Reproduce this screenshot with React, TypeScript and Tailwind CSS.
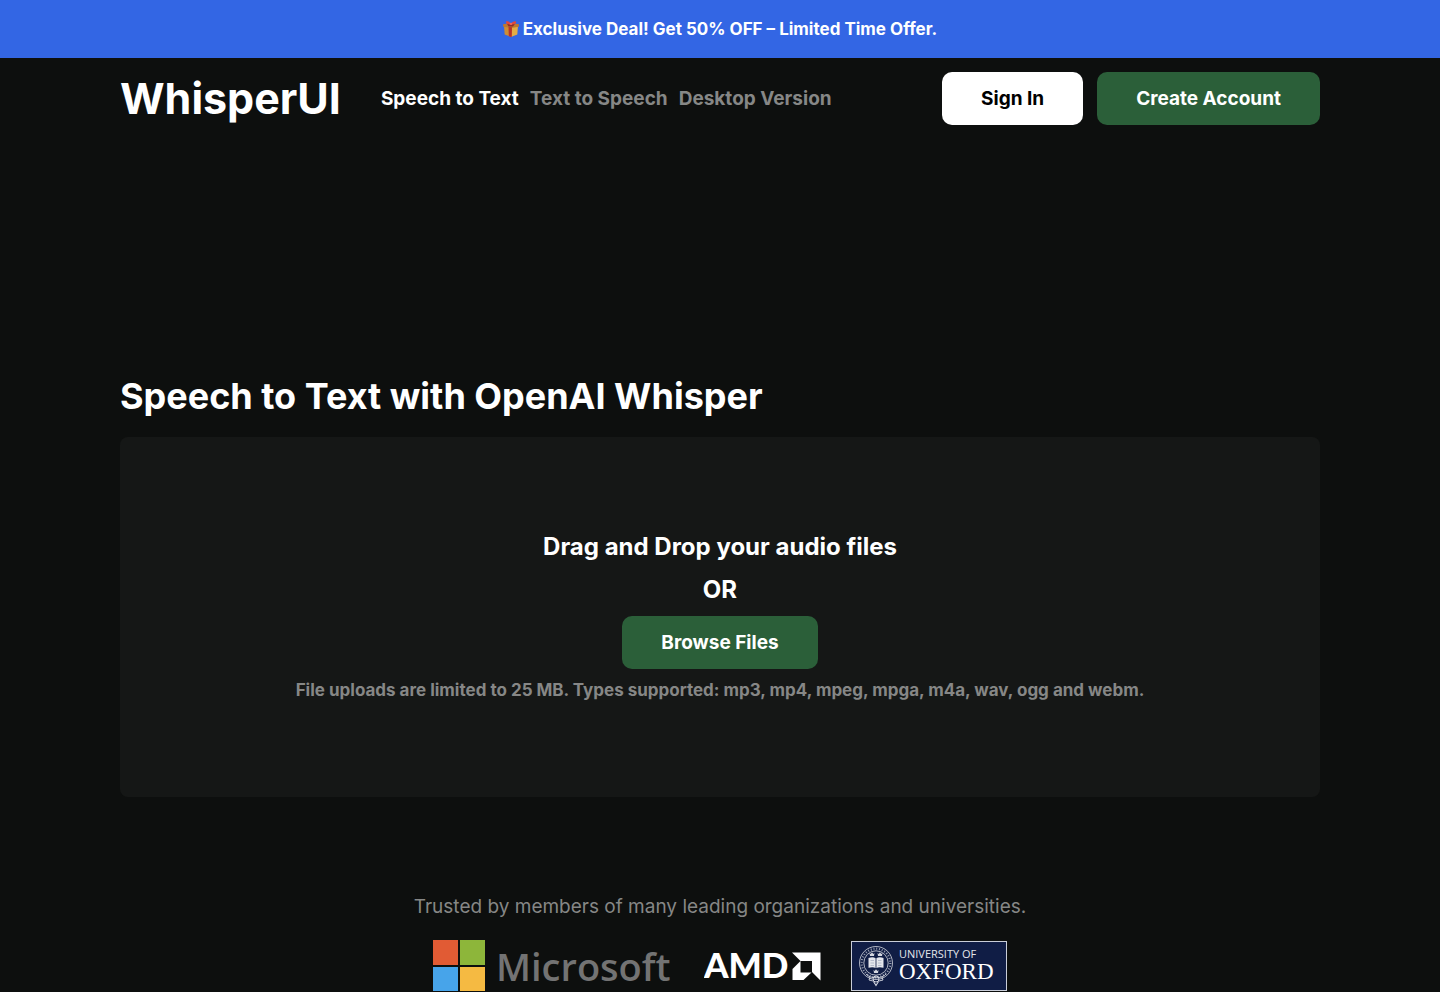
import React, { useRef } from 'react';

const navLinks = [
  { label: 'Speech to Text', href: '#speech-to-text', active: true },
  { label: 'Text to Speech', href: '#text-to-speech', active: false },
  { label: 'Desktop Version', href: '#desktop', active: false },
];

const GiftIcon: React.FC = () => (
  <svg viewBox="0 0 16 16" className="w-4 h-4 shrink-0" aria-hidden="true">
    <path d="M1 4.500 8 6v10l-6.300-2.400z" fill="#cf8d33" />
    <path d="M8 6l7-1.500-.7 9.100L8 16z" fill="#e3ad45" />
    <path d="M0 3.200 8 2l8 1.200-.2 2.500L8 7 .2 5.700z" fill="#bd7730" />
    <path d="M5.500 6l3.500.3-.2 9.500L8 16l-2.200-.8z" fill="#b8322b" />
    <path d="M4 2.800h8l-2 2.800-4.500-.1z" fill="#8e2e2b" />
    <path d="M7.800 2.900C6.600 0 2.800-.7 2.900 1.300c.1 2 3 2.500 4.900 1.600z" fill="#e2473c" />
    <path d="M8 2.900C9.200 0 13.200-.7 13.100 1.300c-.1 2-3.200 2.500-5.100 1.600z" fill="#e2473c" />
    <path d="M6.700 1.900h2.500v2H6.700z" fill="#f0665a" />
  </svg>
);

const MicrosoftLogo: React.FC = () => (
  <svg viewBox="0 0 241 52" className="w-[241px] h-[52px]" role="img" aria-label="Microsoft">
    <path d="M0 0h25v25H0z" fill="#e15b34" />
    <path d="M27 0h25v25H27z" fill="#8db63a" />
    <path d="M0 27h25v24H0z" fill="#47a4ea" />
    <path d="M27 27h25v24H27z" fill="#f5ba42" />
    <text x="63" y="41" fontSize="38" className="font-['Open_Sans',sans-serif] font-semibold" fill="#737373">
      Microsoft
    </text>
  </svg>
);

const AmdLogo: React.FC = () => (
  <svg viewBox="0 -8 117 46" className="w-[117px] h-[46px]" role="img" aria-label="AMD">
    <text x="0" y="27" fontSize="35" className="font-['Lato',sans-serif] font-black" fill="#ffffff">
      AMD
    </text>
    <path d="M88 1.500h28.500v28l-8.500-8.500V10H96.500z" fill="#ffffff" />
    <path d="M96.500 10v11.500h11L99.500 29H88.500V18z" fill="#ffffff" />
  </svg>
);

const OxfordLogo: React.FC = () => (
  <svg viewBox="0 0 156 50" className="w-[156px] h-[50px]" role="img" aria-label="University of Oxford">
    <rect x="0.5" y="0.5" width="155" height="49" fill="#101d45" stroke="#c9cdd8" />
    <g fill="none" stroke="#d5d8e0">
      <circle cx="25" cy="22" r="16.5" strokeWidth="0.8" />
      <circle cx="25" cy="22" r="14.3" strokeWidth="2.2" strokeDasharray="1 1.8" opacity="0.7" />
      <circle cx="25" cy="22" r="12.2" strokeWidth="0.8" />
      <path d="M15 33c4 5 16 5 20 0M19 36l-1 3 4 1M31 36l1 3-4 1" strokeWidth="0.9" />
      <circle cx="25" cy="38" r="3" strokeWidth="1" />
      <path d="M22.500 40.500l2.500 4 2.500-4" strokeWidth="1.100" />
    </g>
    <path d="M17.500 17c2.500-1 5.500-1 7.100.2V27c-1.600-1-4.600-1-7.100-.2zM25.400 17.200C27 16 30 16 32.500 17v9.800c-2.500-.8-5.500-.8-7.100.2z" fill="#e4e6ec" />
    <path d="M19.500 19.500h3.500M19.500 22h3.500M19.500 24.500h3.500M27 19.500h3.500M27 22h3.500M27 24.500h3.500" stroke="#8690ab" strokeWidth="0.5" />
    <path d="M18.500 12l1.200 1 1.300-1.800 1.300 1.800 1.200-1-.5 3h-4zM26.500 12l1.200 1 1.300-1.800 1.300 1.800 1.200-1-.5 3h-4zM22.500 29l1.200 1 1.300-1.800 1.300 1.800 1.200-1-.5 3h-4z" fill="#d5d8e0" />
    <text x="48" y="17" fontSize="11" className="font-['Open_Sans',sans-serif]" fill="#e4e6ec">
      UNIVERSITY OF
    </text>
    <text x="48" y="38" fontSize="23" className="font-['Liberation_Serif',serif]" fill="#ffffff">
      OXFORD
    </text>
  </svg>
);

export default function App() {
  const fileInput = useRef<HTMLInputElement>(null);

  return (
    <div className="min-h-screen overflow-x-hidden bg-[#0d0f0e] font-['Inter',sans-serif] text-white">
      <div className="flex items-center justify-center gap-1 bg-[#3366e4] px-4 py-[15px] text-[17px] leading-7 font-bold">
        <GiftIcon />
        <p>Exclusive Deal! Get 50% OFF – Limited Time Offer.</p>
      </div>

      <div className="mx-auto max-w-[1200px]">
        <header className="flex flex-wrap items-center justify-between gap-4 py-3.5">
          <div className="flex flex-wrap items-center gap-10">
            <a href="#home" className="text-[43px] leading-[53px] font-bold">WhisperUI</a>
            <nav className="flex flex-wrap gap-[11px] text-[19px] leading-7 font-bold">
              {navLinks.map((link) => (
                <a key={link.href} href={link.href} className={link.active ? 'text-white' : 'text-[#868786]'}>
                  {link.label}
                </a>
              ))}
            </nav>
          </div>
          <div className="flex gap-3.5 text-[19px] leading-[29px] font-bold">
            <button type="button" className="rounded-[10px] bg-white px-[39px] py-3 text-black">Sign In</button>
            <button type="button" className="rounded-[10px] bg-[#2b5f39] px-[39px] py-3">Create Account</button>
          </div>
        </header>

        <main className="pt-[235px]">
          <h1 className="text-4xl leading-[44px] font-bold">Speech to Text with OpenAI Whisper</h1>

          <section className="mt-[19px] flex min-h-[360px] flex-col items-center justify-center rounded-lg bg-[#151716] px-6 text-center font-bold">
            <p className="text-2xl leading-[29px]">Drag and Drop your audio files</p>
            <p className="mt-3.5 text-2xl leading-[29px]">OR</p>
            <input ref={fileInput} id="audio-files" type="file" aria-label="Audio files" accept="audio/*,.webm,.mp4" multiple className="hidden" />
            <button
              type="button"
              onClick={() => fileInput.current?.click()}
              className="mt-3 rounded-[10px] bg-[#2b5f39] px-[39px] py-3 text-[19px] leading-[29px]"
            >
              Browse Files
            </button>
            <p className="mt-2 text-[17px] leading-[26px] text-[#868786]">
              File uploads are limited to 25 MB. Types supported: mp3, mp4, mpeg, mpga, m4a, wav, ogg and webm.
            </p>
          </section>

          <section className="mt-24 text-center">
            <p className="text-[19px] leading-7 text-[#868786]">
              Trusted by members of many leading organizations and universities.
            </p>
            <div className="mt-[19px] flex flex-wrap items-center justify-center gap-[30px]">
              <MicrosoftLogo />
              <AmdLogo />
              <OxfordLogo />
            </div>
          </section>
        </main>
      </div>
    </div>
  );
}
